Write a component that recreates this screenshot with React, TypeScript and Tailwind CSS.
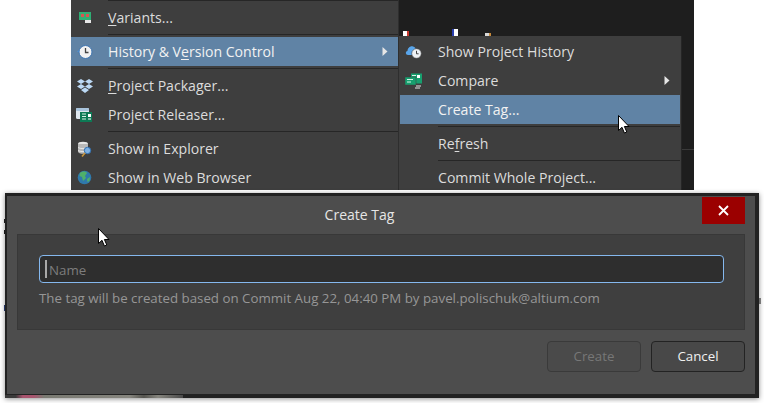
import React from 'react';

const font = { fontFamily: '"Open Sans", "Noto Sans", sans-serif' };

const Sep = ({ sub = false }: { sub?: boolean }) => (
  <div className={`h-[5px] flex items-center ${sub ? 'pl-[38px]' : 'pl-[37px]'}`}>
    <div className="h-px w-full bg-[#262626]" />
  </div>
);

const Arrow = () => (
  <svg width="6" height="9" viewBox="0 0 6 9" className="ml-auto mr-[10px]">
    <path d="M0.5 0 L5.5 4.5 L0.5 9 Z" fill="#e6e6e6" />
  </svg>
);

const Row = ({
  icon,
  active,
  arrow,
  sub,
  children,
}: {
  icon?: React.ReactNode;
  active?: boolean;
  arrow?: boolean;
  sub?: boolean;
  children: React.ReactNode;
}) => (
  <div className={`h-[29px] flex items-center text-[14.1px] ${active ? 'bg-[#6083a5] text-[#f2f2f2]' : 'text-[#dcdcdc]'}`}>
    <div className={`w-[27px] flex justify-center shrink-0 ${sub ? 'mr-[11px]' : 'mr-[10px]'}`}>{icon}</div>
    <span className="whitespace-nowrap">{children}</span>
    {arrow && <Arrow />}
  </div>
);

const U = ({ children }: { children: string }) => <span className="underline underline-offset-2">{children}</span>;

const BoardIcon = () => (
  <svg width="14" height="13" viewBox="0 0 14 13">
    <rect x="1" y="1" width="12" height="8" fill="#2fae74" />
    <rect x="3" y="3" width="3" height="3" fill="#d9534f" />
    <rect x="8" y="3" width="3" height="3" fill="#d9534f" />
    <rect x="7" y="9" width="6" height="3" fill="#e8e8e8" />
  </svg>
);

const ClockIcon = () => (
  <svg width="16" height="16" viewBox="0 0 16 16">
    <path d="M2 8 L0 8 L3 5 Z" fill="#4d94dc" />
    <circle cx="8.5" cy="8" r="6.5" fill="#f2f2f2" stroke="#3f76b2" strokeWidth="1" />
    <path d="M8.5 4 V8.5 H11.5" fill="none" stroke="#444" strokeWidth="1.3" />
  </svg>
);

const DropboxIcon = () => (
  <svg width="16" height="14" viewBox="0 0 16 14">
    <path d="M4 0 L8 2.5 L4 5 L0 2.5 Z M12 0 L16 2.5 L12 5 L8 2.5 Z M4 5 L8 7.5 L4 10 L0 7.5 Z M12 5 L16 7.5 L12 10 L8 7.5 Z M4 11 L8 8.5 L12 11 L8 14 Z" fill="#bcd9f5" />
  </svg>
);

const ReleaserIcon = () => (
  <svg width="17" height="16" viewBox="0 0 17 16">
    <rect x="0" y="1" width="13" height="11" rx="1.5" fill="#dfe7ee" />
    <rect x="0" y="1" width="13" height="3" rx="1" fill="#a9c4dc" />
    <rect x="4" y="5" width="12" height="10" fill="#0d7a55" />
    <path d="M6 7 H10 M6 9.5 H10 M6 12 H10" stroke="#d6efe4" strokeWidth="1" />
    <rect x="12" y="7" width="3" height="3" fill="#fff" />
    <path d="M12 12 H15" stroke="#fff" />
  </svg>
);

const ExplorerIcon = () => (
  <svg width="16" height="16" viewBox="0 0 16 16">
    <ellipse cx="6" cy="3" rx="5" ry="2.2" fill="#e6e6e6" />
    <path d="M1 3 V10.5 C1 12 3.5 12.8 6 12.8 C8.5 12.8 11 12 11 10.5 V3 Z" fill="#b9b9b9" />
    <path d="M1 6.5 C3 8 9 8 11 6.5 M1 9.5 C3 11 9 11 11 9.5" stroke="#e6e6e6" fill="none" />
    <circle cx="10.5" cy="9.5" r="3.2" fill="#7fb2e5" stroke="#2f6fb0" />
    <path d="M8 12 L5 15.5" stroke="#c9953c" strokeWidth="1.6" />
  </svg>
);

const GlobeIcon = () => (
  <svg width="15" height="16" viewBox="0 0 15 16">
    <circle cx="7.5" cy="7.5" r="6.8" fill="#2f79ab" />
    <path d="M3 3 C5 1 9 1 10 3 L8 6 L9 8 L6 11 L5 7 L2.5 6 Z" fill="#4fb06a" />
    <path d="M10 9 L13 7 L12.5 11 L10.5 12 Z" fill="#4fb06a" />
  </svg>
);

const CloudClockIcon = () => (
  <svg width="17" height="14" viewBox="0 0 17 14">
    <path d="M3 10 C0.5 10 0 6.5 2.5 6 C2.5 3 5.5 0.5 8 1.5 C10 2 11 4 11 5 C13 5 14 7 14 10 Z" fill="#59a5ea" />
    <circle cx="11.5" cy="8.5" r="4.8" fill="#eef1f4" stroke="#3f3f3f" strokeWidth="0.6" />
    <path d="M11.5 5.8 V8.8 H13.6" stroke="#444" fill="none" />
  </svg>
);

const CompareIcon = () => (
  <svg width="17" height="16" viewBox="0 0 17 16">
    <rect x="6" y="0.5" width="11" height="10" fill="#17a06f" />
    <rect x="0" y="4" width="11" height="8" fill="#17a06f" stroke="#3e3e3e" strokeWidth="0.5" />
    <rect x="12" y="2" width="3" height="3" fill="#fff" />
    <path d="M2 6.5 H8 M2 9 H6" stroke="#d9f2e8" />
    <path d="M7 2.5 H11" stroke="#d9f2e8" />
    <path d="M11 13 H16 M10 15 H15" stroke="#e6e6e6" />
  </svg>
);

const Cursor = ({ className }: { className: string }) => (
  <svg width="12" height="19" viewBox="0 0 12 19" className={className}>
    <path d="M0.5 0.5 V15.5 L4 12.3 L6.4 18 L8.8 17 L6.4 11.5 H11 Z" fill="#fff" stroke="#000" strokeWidth="1" />
  </svg>
);

export default function App() {
  return (
    <div className="relative w-[764px] h-[403px] bg-white overflow-hidden" style={font}>
      {/* context menus */}
      <div className="ml-[71px] w-[623px] h-[190px] bg-[#1e1e1e] flex overflow-hidden relative">
        <div className="w-[328px] bg-[#3e3e3e] border-r border-[#2e2e2e] shrink-0">
          <div className="h-[3px] pl-[37px]">
            <div className="h-px w-full bg-[#262626]" />
          </div>
          <Row icon={<BoardIcon />}>
            <U>V</U>ariants...
          </Row>
          <Sep />
          <Row icon={<ClockIcon />} active arrow>
            History &amp; V<U>e</U>rsion Control
          </Row>
          <Sep />
          <Row icon={<DropboxIcon />}>
            <U>P</U>roject Packager...
          </Row>
          <Row icon={<ReleaserIcon />}>Project Releaser...</Row>
          <Sep />
          <Row icon={<ExplorerIcon />}>Show in Explorer</Row>
          <Row icon={<GlobeIcon />}>Show in Web Browser</Row>
        </div>
        <div className="w-[283px] mt-[36px] bg-[#3e3e3e] border-r border-[#262626] shrink-0">
          <div className="pt-px pl-px pr-px">
            <Row sub icon={<CloudClockIcon />}>Show Project History</Row>
            <Row sub icon={<CompareIcon />} arrow>
              Compare
            </Row>
            <Row sub active>Create Tag...</Row>
            <Sep sub />
            <Row sub>
              Re<U>f</U>resh
            </Row>
            <Sep sub />
            <Row sub>Commit Whole Project...</Row>
          </div>
        </div>
        <div className="flex-1 pt-[149px]">
          <div className="h-px bg-[#3a3a3a]" />
        </div>
        {/* glyph tops peeking out above the submenu */}
        <div className="absolute left-[332px] top-[31px] w-[6px] h-[5px] bg-white border-r-2 border-[#c8372d]" />
        <div className="absolute left-[381px] top-[29px] w-[6px] h-[7px] bg-white border-l-2 border-[#2a3fb0]" />
        <div className="absolute left-[414px] top-[33px] w-[6px] h-[3px] bg-[#d8d8d8] border-r-2 border-[#c98a3a]" />
      </div>
      <Cursor className="absolute left-[618px] top-[115px]" />

      {/* specks of the window behind the dialog */}
      <div className="absolute left-[4px] top-[219px] w-px h-[4px] bg-[#222222]" />
      <div className="absolute left-[4px] top-[230px] w-px h-[4px] bg-[#222222]" />
      <div className="absolute left-[4px] top-[305px] w-px h-[6px] bg-[#2a3f7a]" />
      <div className="absolute left-[759px] top-[298px] w-[2px] h-[6px] bg-[#8a8a8a]" />

      {/* dialog */}
      <div className="relative ml-[5px] mt-[3px] w-[754px] h-[205px] bg-[#4d4d4d] border-l-[2px] border-r-[4px] border-t-[3px] border-b-[4px] border-[#222222] shadow-[0_1px_5px_rgba(0,0,0,0.45)] pl-[10px] pr-[10px] flex flex-col">
        <div className="h-[38px] flex items-start">
          <div className="flex-1 text-center text-[14px] leading-[38px] text-[#e6e6e6]">Create Tag</div>
          <button className="w-[43px] h-[27px] mt-px bg-[#9b0000] flex items-center justify-center">
            <svg width="11" height="11" viewBox="0 0 11 11">
              <path d="M1 1 L10 10 M10 1 L1 10" stroke="#fff" strokeWidth="1.8" />
            </svg>
          </button>
        </div>
        <div className="h-[96px] bg-[#3f3f3f] border border-[#383838] pl-[21px] pr-[20px] pt-[20px]">
          <div className="h-[28px] bg-[#2e2e2e] border border-[#85b8ee] rounded-[4px] flex items-center pl-[5px]">
            <div className="w-[2px] h-[18px] bg-[#a8a8a8]" />
            <span className="ml-[2px] pt-[3px] text-[13.3px] text-[#7d7d7d]">Name</span>
          </div>
          <div className="mt-[5px] text-[13.3px] leading-[20px] text-[#969696] whitespace-nowrap">
            The tag will be created based on Commit Aug 22, 04:40 PM by pavel.polischuk@altium.com
          </div>
        </div>
        <div className="flex justify-end gap-[10px] mt-[11px]">
          <button className="w-[94px] h-[31px] pt-px rounded-[4px] border border-[#3a3a3a] bg-[#4a4a4a] text-[13.3px] text-[#777777]">Create</button>
          <button className="w-[94px] h-[31px] pt-px rounded-[4px] border border-[#232323] bg-[#484848] text-[13.3px] text-[#f0f0f0]">Cancel</button>
        </div>
        <div className="absolute left-[-2px] bottom-[-4px] w-[178px] h-[3px] bg-[linear-gradient(90deg,#3a3a3a_0,#3a3a3a_6%,#a8546e_10%,#a8546e_16%,#7a7a72_22%,#86857e_70%,#55544f_78%,#86857e_86%,#4a4a4a_100%)]" />
      </div>
      <Cursor className="absolute left-[98px] top-[228px]" />
    </div>
  );
}
